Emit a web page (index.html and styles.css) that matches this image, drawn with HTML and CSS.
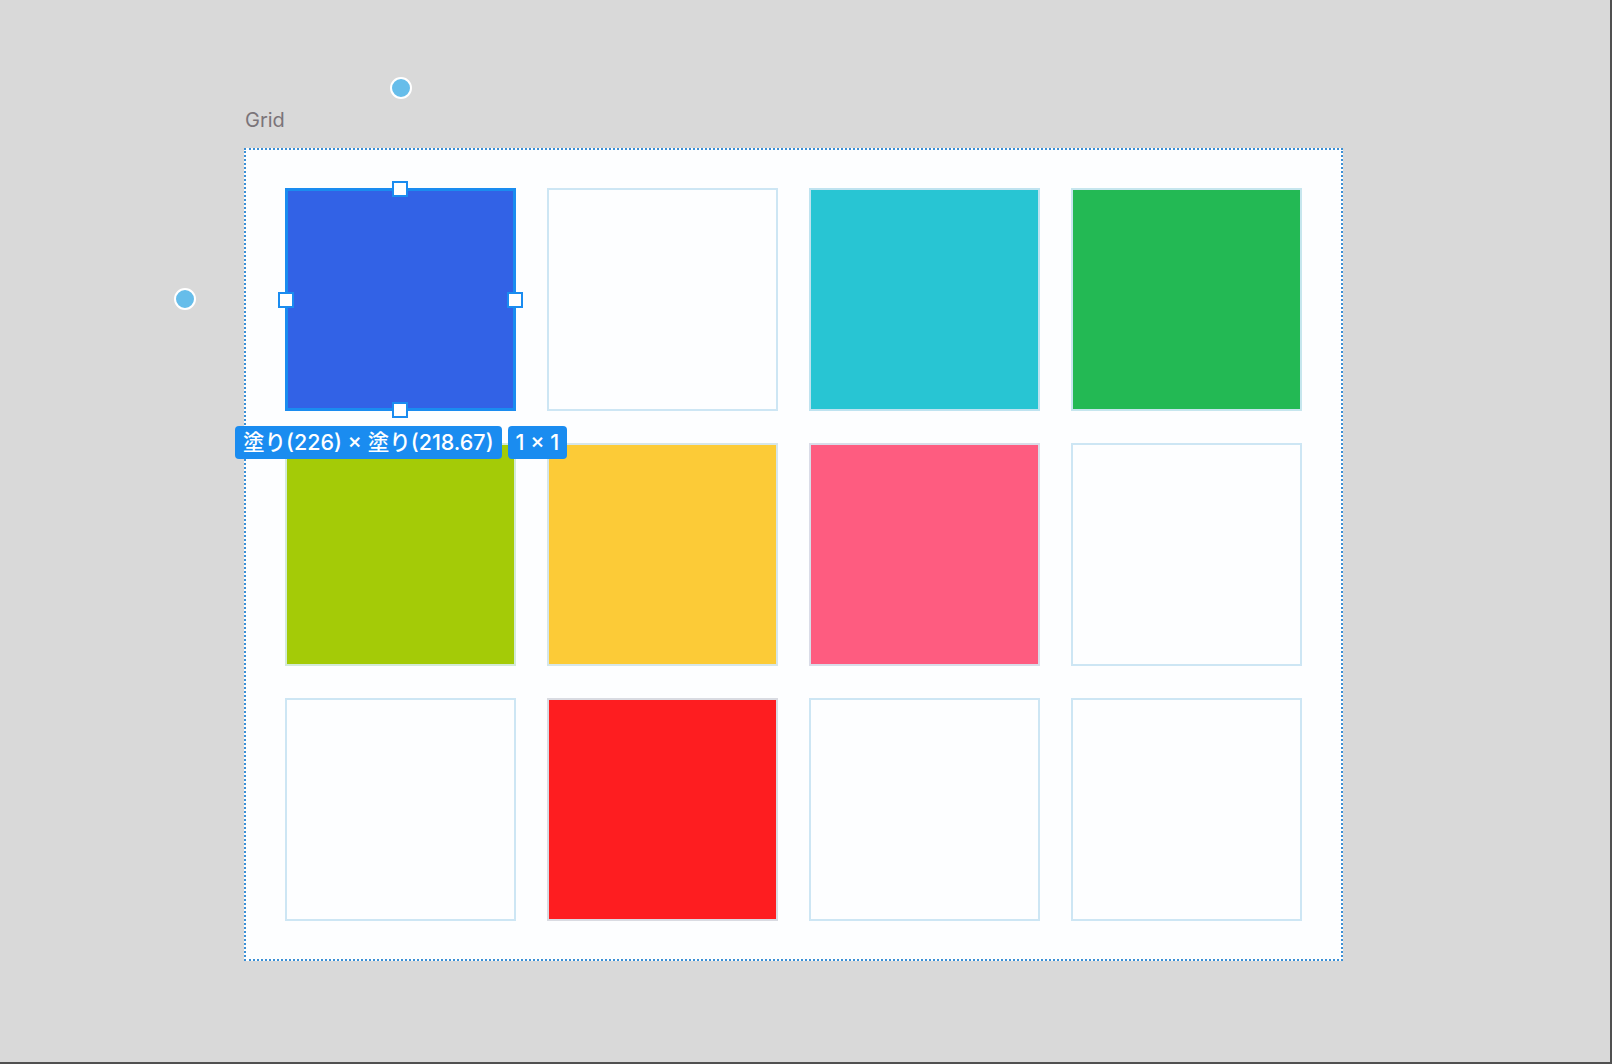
FILE: index.html
```html
<!DOCTYPE html>
<html>
<head>
	<meta charset="UTF-8">
	<title>Grid</title>
	<link rel="stylesheet" href="styles.css">
</head>
<body>
 <div class="canvas">
	 <div class="frame-name">Grid</div>
	 <div class="frame">
		 <div class="cell c-blue selected">
			 <span class="dot dot-top"></span>
			 <span class="dot dot-left"></span>
			 <span class="handle h-top"></span>
			 <span class="handle h-right"></span>
			 <span class="handle h-bottom"></span>
			 <span class="handle h-left"></span>
			 <div class="size-tip">
				 <span class="pill">塗り(226) × 塗り(218.67)</span>
				 <span class="pill">1 × 1</span>
			 </div>
		 </div>
		 <div class="cell"></div>
		 <div class="cell c-cyan"></div>
		 <div class="cell c-green"></div>

		 <div class="cell c-lime"></div>
		 <div class="cell c-yellow"></div>
		 <div class="cell c-pink"></div>
		 <div class="cell"></div>

		 <div class="cell"></div>
		 <div class="cell c-red"></div>
		 <div class="cell"></div>
		 <div class="cell"></div>
	 </div>
 </div>
</body>
</html>
```

FILE: styles.css
```css
* {
	margin: 0;
	padding: 0;
	box-sizing: border-box;
}
body {
	background: #d9d9d9;
	font-family: "Inter", "Noto Sans CJK JP", sans-serif;
}
.canvas {
	width: 1612px;
	height: 1064px;
	padding: 107px 0 0 244px;
	border-right: 2px solid #505050;
	border-bottom: 2px solid #505050;
}
.frame-name {
	font-size: 20px;
	line-height: 26px;
	height: 41px;
	color: #7b7479;
	padding-left: 1px;
}
.frame {
	width: 1099px;
	height: 813px;
	background: #fdfeff;
	border: 2px dotted #3b8fd4;
	padding: 38px 39px 38px 39px;
	display: grid;
	grid-template-columns: repeat(4, 231px);
	grid-template-rows: repeat(3, 223px);
	column-gap: 31px;
	row-gap: 32px;
}
.cell {
	background: #fdfeff;
	border: 2px solid #cde6f4;
	position: relative;
}
.c-blue { background: #3262e6; }
.c-cyan { background: #28c5d3; border-color: #bfe3f0; }
.c-green { background: #23b954; border-color: #c6e6ee; }
.c-lime { background: #a4cb07; border-color: #d3ead8; }
.c-yellow { background: #fccb37; border-color: #d6e6e9; }
.c-pink { background: #fe5c80; border-color: #d9dce8; }
.c-red { background: #fe1d20; border-color: #d9dbe2; }

.selected {
	border: 3px solid #1a8cf0;
}
.handle {
	position: absolute;
	width: 16px;
	height: 16px;
	background: #fff;
	border: 2px solid #1a8cf0;
}
.h-top { top: -10px; left: 104px; }
.h-bottom { bottom: -10px; left: 104px; }
.h-left { left: -10px; top: 101px; }
.h-right { right: -10px; top: 101px; }

.dot {
	position: absolute;
	width: 22px;
	height: 22px;
	border-radius: 50%;
	background: #66bdea;
	border: 2px solid #fff;
}
.dot-top { top: -114px; left: 102px; }
.dot-left { left: -114px; top: 97px; }

.size-tip {
	position: absolute;
	left: -53px;
	top: 235px;
	display: flex;
	gap: 6px;
	z-index: 2;
}
.pill {
	display: block;
	height: 33px;
	line-height: 33px;
	padding: 0 8px;
	background: #1a8cf0;
	color: #fff;
	font-size: 21.5px;
	font-weight: 500;
	border-radius: 4px;
	white-space: nowrap;
}
```
